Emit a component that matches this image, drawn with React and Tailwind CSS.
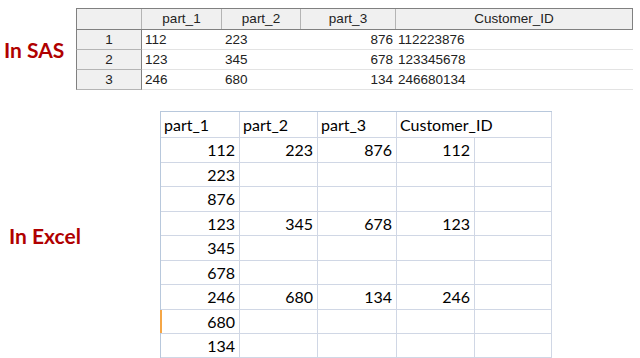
import React from 'react'

const SAS_COLS = [
  { label: '', w: 'w-[66px]' },
  { label: 'part_1', w: 'w-[80px]' },
  { label: 'part_2', w: 'w-[79px]' },
  { label: 'part_3', w: 'w-[95px]' },
  { label: 'Customer_ID', w: 'w-[236px]' },
]

const SAS_ROWS = [
  ['1', '112', '223', '876', '112223876'],
  ['2', '123', '345', '678', '123345678'],
  ['3', '246', '680', '134', '246680134'],
]

const XL_ROWS = [
  ['112', '223', '876', '112', ''],
  ['223', '', '', '', ''],
  ['876', '', '', '', ''],
  ['123', '345', '678', '123', ''],
  ['345', '', '', '', ''],
  ['678', '', '', '', ''],
  ['246', '680', '134', '246', ''],
  ['680', '', '', '', ''],
  ['134', '', '', '', ''],
]

const XL_W = ['w-[79px]', 'w-[78px]', 'w-[79px]', 'w-[78px]', 'w-[77px]']
const XL_H = ['h-[25px]', 'h-[24px]', 'h-[25px]', 'h-[24px]', 'h-[25px]', 'h-[24px]', 'h-[25px]', 'h-[24px]', 'h-[24px]']

function SasTable() {
  return (
    <div className="text-[13.5px] text-[#222] font-['Liberation_Sans',sans-serif] leading-none">
      {/* header */}
      <div className="flex h-[22px] bg-[#f0f0f0] border border-[#808080]">
        {SAS_COLS.map((c, i) => (
          <div
            key={i}
            className={`${c.w} flex items-center justify-center ${i < 4 ? 'border-r border-[#b4b4b4]' : ''} ${i === 0 ? '-ml-px' : ''}`}
          >
            {c.label}
          </div>
        ))}
      </div>
      {SAS_ROWS.map((r, ri) => (
        <div key={ri} className="flex h-[20px] border-b border-[#e3e3e3]">
          {r.map((v, ci) => {
            if (ci === 0) {
              return (
                <div key={ci} className="w-[66px] bg-[#f0f0f0] border-l border-r border-[#808080] border-b border-b-[#b4b4b4] -mb-px flex items-center justify-center">
                  {v}
                </div>
              )
            }
            const w = SAS_COLS[ci].w
            const right = ci === 3
            return (
              <div key={ci} className={`${w} flex items-center px-[3px] ${right ? 'justify-end' : ''} ${ci === 4 ? 'pl-[2px]' : ''}`}>
                {v}
              </div>
            )
          })}
        </div>
      ))}
    </div>
  )
}

function ExcelTable() {
  return (
    <div className="font-['Lato',sans-serif] text-[16px] text-black leading-none border-t border-l border-[#b8c8dc]">
      <div className="flex h-[26px] border-b border-[#d0d7e5]">
        {['part_1', 'part_2', 'part_3'].map((h, i) => (
          <div key={i} className={`${XL_W[i]} border-r border-[#d0d7e5] flex items-center px-[3px]`}>{h}</div>
        ))}
        <div className="w-[155px] border-r border-[#d0d7e5] flex items-center px-[3px]">Customer_ID</div>
      </div>
      {XL_ROWS.map((r, ri) => (
        <div key={ri} className={`flex ${XL_H[ri]} border-b border-[#d0d7e5] ${ri === 7 ? 'relative' : ''}`}>
          {ri === 7 && <div className="absolute left-[-1px] top-0 bottom-0 w-[2px] bg-[#f5a646]" />}
          {r.map((v, ci) => (
            <div key={ci} className={`${XL_W[ci]} border-r border-[#d0d7e5] flex items-center justify-end px-[4px]`}>
              {v}
            </div>
          ))}
        </div>
      ))}
    </div>
  )
}

export default function App() {
  return (
    <div className="w-[640px] h-[358px] bg-white overflow-hidden">
      <div className="flex pt-[8px]">
        <div className="w-[76px] flex items-center pl-[4px] pt-[2px]">
          <span className="font-['Lato',sans-serif] font-bold text-[21px] text-[#b00000]">In SAS</span>
        </div>
        <SasTable />
      </div>
      <div className="flex mt-[21px]">
        <div className="w-[160px] flex items-center pl-[9px] pt-[2px]">
          <span className="font-['Lato',sans-serif] font-bold text-[21px] text-[#b00000]">In Excel</span>
        </div>
        <ExcelTable />
      </div>
    </div>
  )
}
